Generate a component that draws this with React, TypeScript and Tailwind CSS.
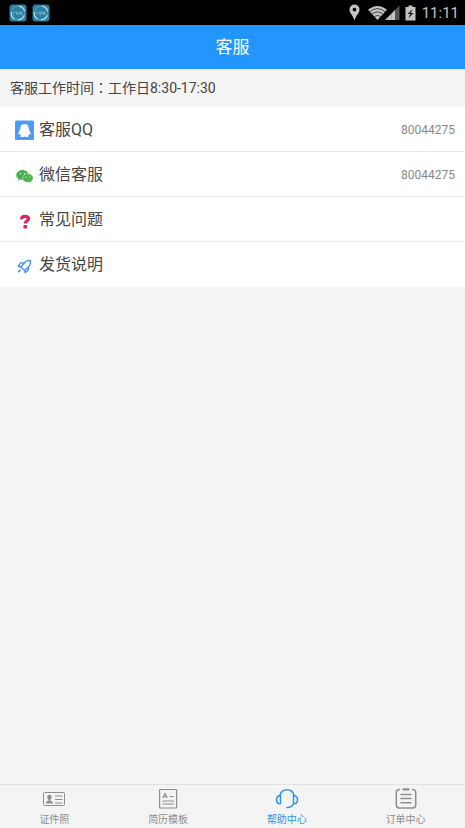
import { useState } from "react";
import type { ReactNode } from "react";

/* ---------- status bar ---------- */
function AppBadge() {
  return (
    <svg className="h-[18px] w-[18px]" viewBox="0 0 18 18" fill="none" aria-hidden="true">
      <rect x="0.5" y="0.5" width="17" height="17" rx="3" fill="#2a7fa3" />
      <circle cx="9" cy="9" r="6.8" stroke="#4f9dba" strokeWidth="1.2" />
      <path d="M10 2.200a6.800 6.800 0 0 1 5.600 5M15.200 11.600A6.800 6.800 0 0 1 9 15.800M5.600 15A6.800 6.800 0 0 1 2.300 8" stroke="#b4d9e6" strokeWidth="1.3" />
      <path d="M4.8 10.4V8h1.8M7.6 8h1.6v2.4H7.6zM10.4 8l1.4 2.4M11.8 8l-1.4 2.4M13.4 8h-1v2.4h1" stroke="#8cc0d3" strokeWidth="0.7" />
    </svg>
  );
}

function StatusBar() {
  return (
    <div className="flex h-[25px] items-center justify-between bg-black pl-[9px] pr-[6px]">
      <div className="flex gap-[5px]">
        <AppBadge />
        <AppBadge />
      </div>
      <div className="flex items-center text-[#c4c4c4]">
        <svg className="mr-2 h-[17px] w-[11px]" viewBox="0 0 11 17" fill="currentColor" aria-hidden="true">
          <path fillRule="evenodd" d="M5.5 0.5A5 5 0 0 0 0.5 5.5c0 4 4 6.500 5 11 1-4.500 5-7 5-11a5 5 0 0 0-5-5zm0 3.200a1.900 1.900 0 1 1 0 3.800 1.900 1.900 0 0 1 0-3.800z" />
        </svg>
        <svg className="h-4 w-[32px]" viewBox="0 0 32 16" fill="none" aria-hidden="true">
          <path d="M0 4.800Q9.500-3 19 4.800L9.500 15z" fill="#c4c4c4" />
          <path d="M2 6.600Q9.500 0.600 17 6.600M4.200 9Q9.500 4.900 14.800 9M6.400 11.500Q9.500 9.300 12.600 11.500" stroke="#000" strokeWidth="0.7" />
          <path d="M31.500 0.500V15H27V5z" fill="#555" />
          <path d="M27 5v10H17z" fill="#c4c4c4" />
          <path d="M20.500 11.500V15M23.500 8.500V15" stroke="#999" strokeWidth="0.600" />
        </svg>
        <svg className="ml-[5px] mr-[6px] h-4 w-[11px]" viewBox="0 0 11 16" aria-hidden="true">
          <path d="M3.500 0.500h4v1.500H10.500v13.500H0.500V2h3z" fill="#c4c4c4" />
          <path d="M7.500 4L2.500 9h2.600L3.500 13.500 8.500 8H6z" fill="#222" />
        </svg>
        <time className="text-[15px] leading-6">11:11</time>
      </div>
    </div>
  );
}

/* ---------- list icons ---------- */
function QQIcon() {
  return (
    <svg className="h-5 w-5" viewBox="0 0 20 20" aria-hidden="true">
      <rect x="0" y="0.500" width="19" height="19.500" rx="1.500" fill="#4d9bf5" />
      <path
        d="M9.500 4C6.700 4 5.200 6 5.200 8.700c0 1.300-1.800 3-1.800 5 0 1 .6 1.300 1.500.2.300.8.700 1.300 1.200 1.700-1.300.6-.9 1.500.8 1.500 1.200 0 2-.2 2.600-.7.600.5 1.400.7 2.600.7 1.700 0 2.100-.9.800-1.500.500-.4.900-.9 1.200-1.700.9 1.100 1.500.8 1.500-.2 0-2-1.800-3.700-1.800-5C13.800 6 12.300 4 9.500 4z"
        fill="#fff"
      />
    </svg>
  );
}

function WechatIcon() {
  return (
    <svg className="h-5 w-5" viewBox="0 0 20 20" aria-hidden="true">
      <path d="M7.500 5C4 5 1.300 7.200 1.300 10c0 1.600.8 2.900 2.200 3.800L3 15.700l2.200-1.100c.7.200 1.500.3 2.300.3 3.500 0 6.200-2.200 6.200-4.900S11 5 7.500 5z" fill="#4caf50" />
      <path d="M12.800 8.800c-3 0-5.300 1.900-5.300 4.300s2.300 4.300 5.300 4.300c.7 0 1.300-.1 1.900-.3l2 1-.5-1.700c1.200-.8 2-2 2-3.300 0-2.400-2.400-4.300-5.400-4.300z" fill="#4caf50" stroke="#fff" strokeWidth="0.400" />
      <g fill="#fff">
        <circle cx="5.400" cy="8.600" r="0.700" />
        <circle cx="9.600" cy="8.600" r="0.700" />
        <circle cx="11" cy="12" r="0.600" />
        <circle cx="14.600" cy="12" r="0.600" />
      </g>
    </svg>
  );
}

function QuestionIcon() {
  return (
    <svg className="h-5 w-5" viewBox="0 0 20 20" fill="none" aria-hidden="true">
      <path d="M6.600 9.200V8.700C6.800 6.800 8.100 6.300 10 6.300c2 0 3.500.8 3.500 2.500 0 2.100-3.300 2.200-3.300 4.700" stroke="#e0215f" strokeWidth="3.200" />
      <rect x="8.400" y="14.900" width="3.700" height="3.500" rx="1" fill="#e0215f" />
    </svg>
  );
}

function RocketIcon() {
  return (
    <svg className="h-5 w-5" viewBox="0 0 20 20" fill="none" stroke="#3f8cf0" strokeWidth="1.300" strokeLinejoin="round" aria-hidden="true">
      <path d="M15.400 5.300c-3.600-.2-5.500.9-9.300 6.900l3.400 3.200c5.400-3.400 6.200-5.900 5.900-10.100z" />
      <path d="M9.300 7.800H5.800l-2.700 3.400 3 .8M13.300 11.500v3.600l-3.100 2.600-.6-2.200" />
      <path d="M5.500 14.800L3.200 17.200" strokeWidth="1.600" />
    </svg>
  );
}

/* ---------- tab icons ---------- */
function IdCardIcon() {
  return (
    <svg className="h-6 w-6" viewBox="0 0 24 24" fill="none" stroke="currentColor" aria-hidden="true">
      <rect x="1.500" y="5.500" width="21" height="13" rx="1" />
      <path d="M4 16.500c0-2 1-2.300 2.500-2.800v-1C5.500 12 5.300 11 5.300 10c0-1.500.8-2.300 2.100-2.300s2.100.8 2.100 2.300c0 1-.2 2-1.200 2.700v1c1.500.5 2.500.8 2.500 2.800z" fill="currentColor" stroke="none" />
      <path d="M13 9h7.500M13 12.500h7.500M13 16h7.500" strokeWidth="1.200" />
    </svg>
  );
}

function ResumeIcon() {
  return (
    <svg className="h-6 w-6" viewBox="0 0 24 24" fill="none" stroke="currentColor" aria-hidden="true">
      <rect x="3.600" y="2.500" width="17" height="18.500" rx="0.500" strokeWidth="1.200" />
      <path d="M6.700 11L9 6.500l2.300 4.500M7.600 9.700h2.800M13.500 9.500h4M6.500 14h11.500M6.500 17h11.500" strokeWidth="1.200" />
    </svg>
  );
}

function HeadsetIcon() {
  return (
    <svg className="h-6 w-6" viewBox="0 0 24 24" fill="none" stroke="currentColor" strokeWidth="1.500" strokeLinecap="round" aria-hidden="true">
      <path d="M4.800 9C5.500 5 8.300 2.700 12 2.700S18.500 5 19.200 9" />
      <path d="M5.500 8.500v8.300C3 16.800 1.500 15 1.500 12.700S3 8.700 5.500 8.500zM18.500 8.500v8.300c2.500 0 4-1.800 4-4.100s-1.500-4-4-4.200z" strokeLinejoin="round" />
      <path d="M18.300 17c-.9 2.200-3 3.500-6.300 3.500" />
    </svg>
  );
}

function OrderIcon() {
  return (
    <svg className="h-6 w-6" viewBox="0 0 24 24" fill="none" stroke="currentColor" strokeWidth="1.500" strokeLinecap="round" aria-hidden="true">
      <path d="M5.500 2.600C3.300 2.600 2.300 3.400 2.300 5.200v12.800c0 1.900 1 2.900 3 2.900h13.400c2 0 3-1 3-2.900V5.200c0-1.800-1-2.600-3.200-2.600" />
      <path d="M9.500 2.400h5" strokeWidth="2.200" />
      <path d="M7 7.500h10M7 11.500h10M7 15.800h10" />
    </svg>
  );
}

interface Item {
  label: string;
  value?: string;
  icon: ReactNode;
}

const items: Item[] = [
  { label: "客服QQ", value: "80044275", icon: <QQIcon /> },
  { label: "微信客服", value: "80044275", icon: <WechatIcon /> },
  { label: "常见问题", icon: <QuestionIcon /> },
  { label: "发货说明", icon: <RocketIcon /> },
];

const tabs: Item[] = [
  { label: "证件照", icon: <IdCardIcon /> },
  { label: "简历模板", icon: <ResumeIcon /> },
  { label: "帮助中心", icon: <HeadsetIcon /> },
  { label: "订单中心", icon: <OrderIcon /> },
];

export default function App() {
  const [active, setActive] = useState("帮助中心");

  return (
    <div
      lang="zh-CN"
      className="flex min-h-screen flex-col bg-[#f4f4f4] font-[Roboto,'Noto_Sans_CJK_SC',sans-serif] text-[#444]"
    >
      <StatusBar />
      <header className="flex h-11 items-center justify-center bg-[#2395ff]">
        <h1 className="text-[17px] leading-6 text-white">客服</h1>
      </header>

      <main className="flex-1">
        <p className="px-[10px] py-2 text-[14px] leading-[22px]">
          客服工作时间
          <span className="font-['Noto_Sans_CJK_TC',sans-serif] leading-none" lang="zh-TW">：</span>
          工作日8:30-17:30
        </p>
        <ul className="bg-white">
          {items.map((item) => (
            <li key={item.label} className="border-b border-[#ebebeb] last:border-white">
              <button type="button" className="flex h-11 w-full items-center gap-1 pl-[15px] pr-[10px] pt-0.5 text-left">
                {item.icon}
                <span className="flex-1 text-[16px] leading-6">{item.label}</span>
                {item.value && <span className="text-[12px] leading-4 text-[#888]">{item.value}</span>}
              </button>
            </li>
          ))}
        </ul>
      </main>

      <nav className="flex justify-around border-t border-[#e2e2e2] pt-[2px]">
        {tabs.map((tab) => (
          <button
            key={tab.label}
            type="button"
            onClick={() => setActive(tab.label)}
            aria-current={active === tab.label ? "page" : undefined}
            className={`flex flex-col items-center gap-[1px] ${
              active === tab.label ? "text-[#2e93ea]" : "text-[#8e8e8e]"
            }`}
          >
            {tab.icon}
            <span className="text-[10px] leading-4">{tab.label}</span>
          </button>
        ))}
      </nav>
    </div>
  );
}
